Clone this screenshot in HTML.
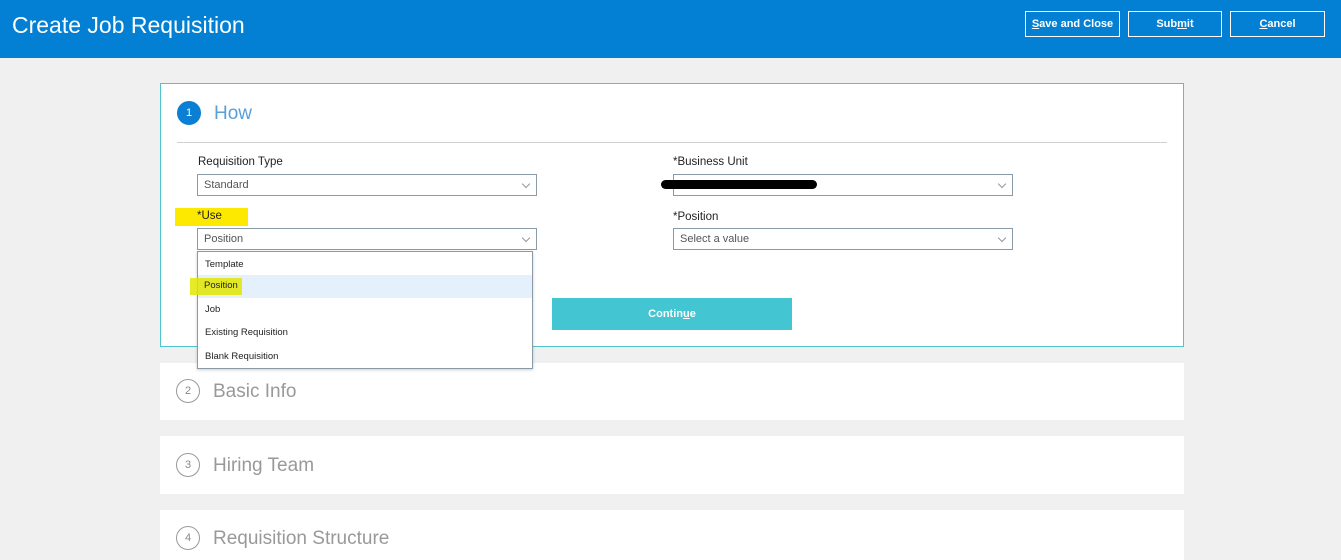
<!DOCTYPE html>
<html><head><style>
*{margin:0;padding:0;box-sizing:border-box}
body{width:1341px;height:551px;overflow:hidden;background:#f0f0f0;font-family:"Liberation Sans",sans-serif;position:relative}
.abs{position:absolute}
.hdr{left:0;top:0;width:1341px;height:58px;background:#0380d4}
.title{left:12px;top:12px;color:#fff;font-size:23px;font-weight:300}
.btn{top:11px;height:26px;border:1px solid #fff;color:#fff;font-size:11px;font-weight:bold;text-align:center;line-height:24px}
.card{background:#fff;left:160px;width:1024px}
.circ{width:24px;height:24px;border-radius:50%;font-size:11px;text-align:center;line-height:22px}
.h{font-size:19px;color:#999}
.lbl{font-size:11.5px;color:#222}
.sel{height:22px;border:1px solid #8a9aa6;background:#fff;font-size:11px;color:#555;padding-left:6px;line-height:20px}
.chev{position:absolute;right:7px;top:6px;width:6px;height:6px;border-right:1px solid #999;border-bottom:1px solid #999;transform:rotate(45deg)}
.it{left:0;width:334px;font-size:9.5px;color:#222;padding-left:7px;height:23px;line-height:23px}
.yl{background:#fde800}
</style></head><body>
<div class="abs hdr"></div>
<div class="abs title">Create Job Requisition</div>
<div class="abs btn" style="left:1025px;width:95px"><u>S</u>ave and Close</div>
<div class="abs btn" style="left:1128px;width:94px">Sub<u>m</u>it</div>
<div class="abs btn" style="left:1230px;width:95px"><u>C</u>ancel</div>

<div class="abs card" style="top:83px;height:264px;border:1px solid #4fc3cf"></div>
<div class="abs circ" style="left:177px;top:101px;background:#0a7fd4;color:#fff;border:1px solid #0a7fd4">1</div>
<div class="abs h" style="left:214px;top:103px;color:#5a9fd8">How</div>
<div class="abs" style="left:177px;top:142px;width:990px;height:1px;background:#d0d0d0"></div>

<div class="abs lbl" style="left:198px;top:156px">Requisition Type</div>
<div class="abs sel" style="left:197px;top:174px;width:340px">Standard<span class="chev"></span></div>
<div class="abs yl" style="left:175px;top:208px;width:73px;height:18px"></div>
<div class="abs lbl" style="left:197px;top:210px">*Use</div>
<div class="abs sel" style="left:197px;top:228px;width:340px">Position<span class="chev"></span></div>

<div class="abs lbl" style="left:673px;top:156px">*Business Unit</div>
<div class="abs sel" style="left:673px;top:174px;width:340px"><span class="chev"></span></div>
<div class="abs" style="left:661px;top:180px;width:156px;height:9px;background:#000;border-radius:5px"></div>
<div class="abs lbl" style="left:673px;top:211px">*Position</div>
<div class="abs sel" style="left:673px;top:228px;width:340px">Select a value<span class="chev"></span></div>

<div class="abs" style="left:552px;top:298px;width:240px;height:32px;background:#43c6d2;color:#fff;font-size:11px;font-weight:bold;text-align:center;line-height:32px">Contin<u>u</u>e</div>

<div class="abs card" style="top:363px;height:57px"></div>
<div class="abs circ" style="left:176px;top:379px;border:1px solid #999;color:#888">2</div>
<div class="abs h" style="left:213px;top:381px">Basic Info</div>
<div class="abs card" style="top:436px;height:58px"></div>
<div class="abs circ" style="left:176px;top:453px;border:1px solid #999;color:#888">3</div>
<div class="abs h" style="left:213px;top:455px">Hiring Team</div>
<div class="abs card" style="top:510px;height:50px"></div>
<div class="abs circ" style="left:176px;top:526px;border:1px solid #999;color:#888">4</div>
<div class="abs h" style="left:213px;top:528px">Requisition Structure</div>

<div class="abs" style="left:197px;top:251px;width:336px;height:118px;background:#fff;border:1px solid #8a9aa6;box-shadow:0 1px 3px rgba(0,0,0,.2)">
<div class="abs it" style="top:1px">Template</div>
<div class="abs it" style="top:23px;background:#e4f0fb"></div>
<div class="abs it" style="top:46px">Job</div>
<div class="abs it" style="top:69px">Existing Requisition</div>
<div class="abs it" style="top:93px">Blank Requisition</div>
</div>
<div class="abs" style="left:190px;top:278px;width:52px;height:17px;background:#e3e600;opacity:.85"></div>
<div class="abs" style="left:204px;top:280px;font-size:9.5px;color:#222">Position</div>
</body></html>
